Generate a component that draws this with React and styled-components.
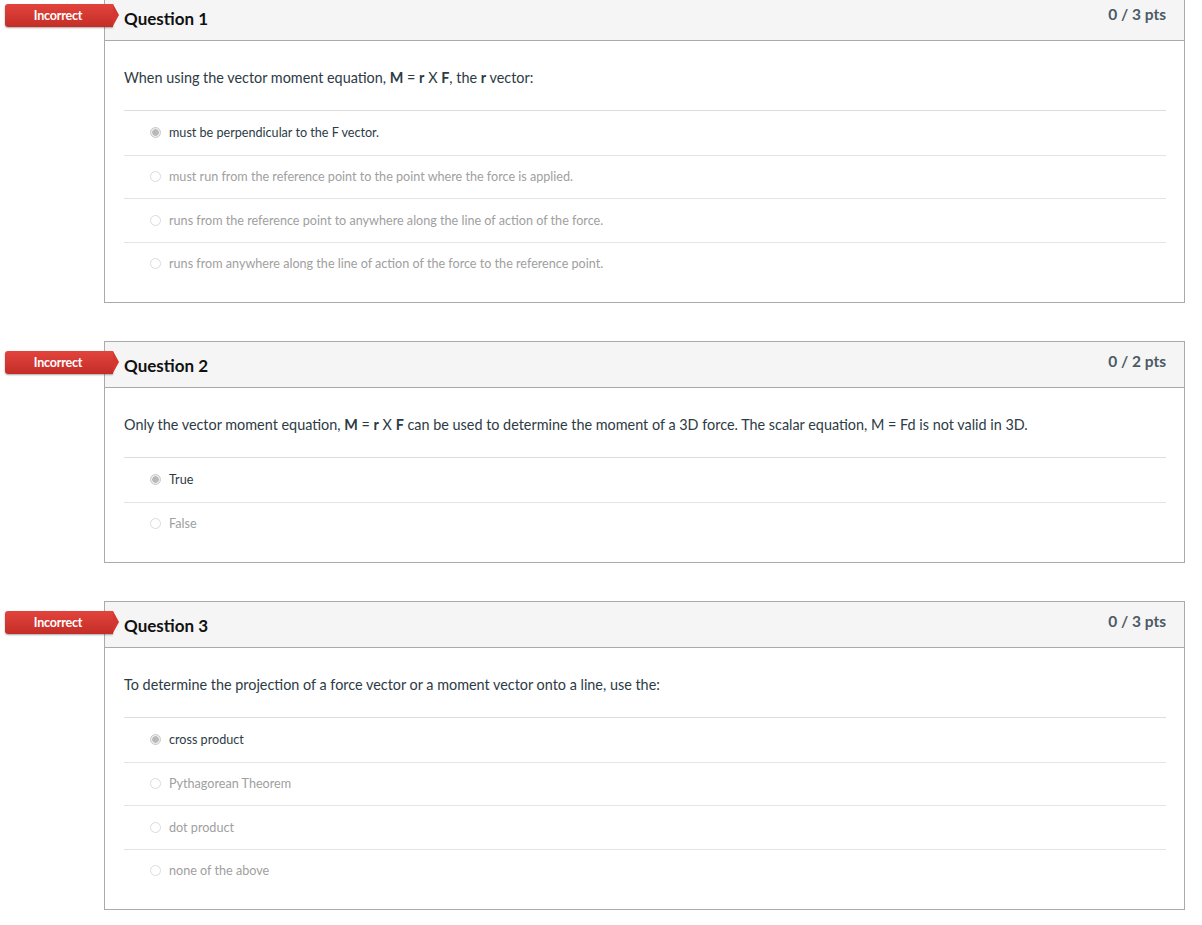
import React from 'react';
import styled, { createGlobalStyle } from 'styled-components';

const GlobalStyle = createGlobalStyle`
  body {
    margin: 0;
    background: #fff;
    font-family: Lato, "Open Sans", "Liberation Sans", sans-serif;
    color: #2d3b45;
  }
`;

const Page = styled.div`
  margin-top: -6px;
  padding-left: 104px;
  width: 1081px;
  display: flex;
  flex-direction: column;
  gap: 38px;
`;

const QuestionBox = styled.div`
  position: relative;
  box-sizing: border-box;
  width: 1081px;
  border: 1px solid #aaa;
  background: #fff;
`;

const Badge = styled.div`
  position: absolute;
  top: 9px;
  left: -100px;
  width: 108px;
  height: 23px;
  box-sizing: border-box;
  padding-right: 2px;
  display: flex;
  align-items: center;
  justify-content: center;
  color: #fff;
  font-size: 12.5px;
  font-weight: 700;
  letter-spacing: -0.2px;
  background: linear-gradient(#e2443d, #c42d27);
  border-radius: 3px 0 0 3px;
  box-shadow: 0 1px 2px rgba(0, 0, 0, 0.35);
  z-index: 1;

  &::after {
    content: '';
    position: absolute;
    right: -6px;
    top: 0;
    border-top: 11.5px solid transparent;
    border-bottom: 11.5px solid transparent;
    border-left: 6px solid #d3372f;
  }
`;

const Header = styled.div`
  height: 45px;
  display: flex;
  justify-content: space-between;
  align-items: flex-start;
  padding: 0 18px 0 19px;
  background: #f5f5f5;
  border-bottom: 1px solid #aaa;
`;

const Title = styled.div`
  padding-top: 13px;
  font-size: 17px;
  line-height: 22px;
  font-weight: 700;
  color: #111;
`;

const Points = styled.div`
  padding-top: 9px;
  font-size: 15.5px;
  line-height: 20px;
  font-weight: 700;
  color: #4c5a66;
`;

const Body = styled.div`
  padding: 27px 18px 17px 19px;
`;

const Prompt = styled.div`
  font-size: 14.4px;
  line-height: 20px;
  margin-bottom: 22px;
  color: #2d3b45;

  b {
    font-weight: 700;
  }
`;

const Answers = styled.div`
  border-top: 1px solid #ddd;
`;

const AnswerRow = styled.div`
  height: 43.5px;
  box-sizing: border-box;
  display: flex;
  align-items: center;
  padding-left: 26px;
  gap: 8px;
  font-size: 12.6px;
  color: ${(p) => (p.selected ? '#2d3b45' : '#a0a0a0')};
  & + & {
    border-top: 1px solid #e4e4e4;
  }
`;

const Radio = styled.span`
  width: 11px;
  height: 11px;
  box-sizing: border-box;
  border-radius: 50%;
  border: 1px solid ${(p) => (p.selected ? '#c8c8c8' : '#dcdcdc')};
  background: ${(p) =>
    p.selected ? 'radial-gradient(circle, #b9b9b9 0 3px, #ececec 3.5px)' : '#fff'};
  flex-shrink: 0;
`;

const questions = [
  {
    title: 'Question 1',
    pts: '0 / 3 pts',
    prompt: (
      <>
        When using the vector moment equation, <b>M</b> = <b>r</b> X <b>F</b>, the <b>r</b> vector:
      </>
    ),
    answers: [
      'must be perpendicular to the F vector.',
      'must run from the reference point to the point where the force is applied.',
      'runs from the reference point to anywhere along the line of action of the force.',
      'runs from anywhere along the line of action of the force to the reference point.',
    ],
    picked: 0,
  },
  {
    title: 'Question 2',
    pts: '0 / 2 pts',
    prompt: (
      <>
        Only the vector moment equation, <b>M</b> = <b>r</b> X <b>F</b> can be used to determine the
        moment of a 3D force. The scalar equation, M = Fd is not valid in 3D.
      </>
    ),
    answers: ['True', 'False'],
    picked: 0,
  },
  {
    title: 'Question 3',
    pts: '0 / 3 pts',
    prompt: <>To determine the projection of a force vector or a moment vector onto a line, use the:</>,
    answers: ['cross product', 'Pythagorean Theorem', 'dot product', 'none of the above'],
    picked: 0,
  },
];

const App = () => {
  return (
    <>
      <GlobalStyle />
      <Page>
        {questions.map((q) => (
          <QuestionBox key={q.title}>
            <Badge>Incorrect</Badge>
            <Header>
              <Title>{q.title}</Title>
              <Points>{q.pts}</Points>
            </Header>
            <Body>
              <Prompt>{q.prompt}</Prompt>
              <Answers>
                {q.answers.map((a, i) => (
                  <AnswerRow key={a} selected={i === q.picked}>
                    <Radio selected={i === q.picked} />
                    {a}
                  </AnswerRow>
                ))}
              </Answers>
            </Body>
          </QuestionBox>
        ))}
      </Page>
    </>
  );
};

export default App;
